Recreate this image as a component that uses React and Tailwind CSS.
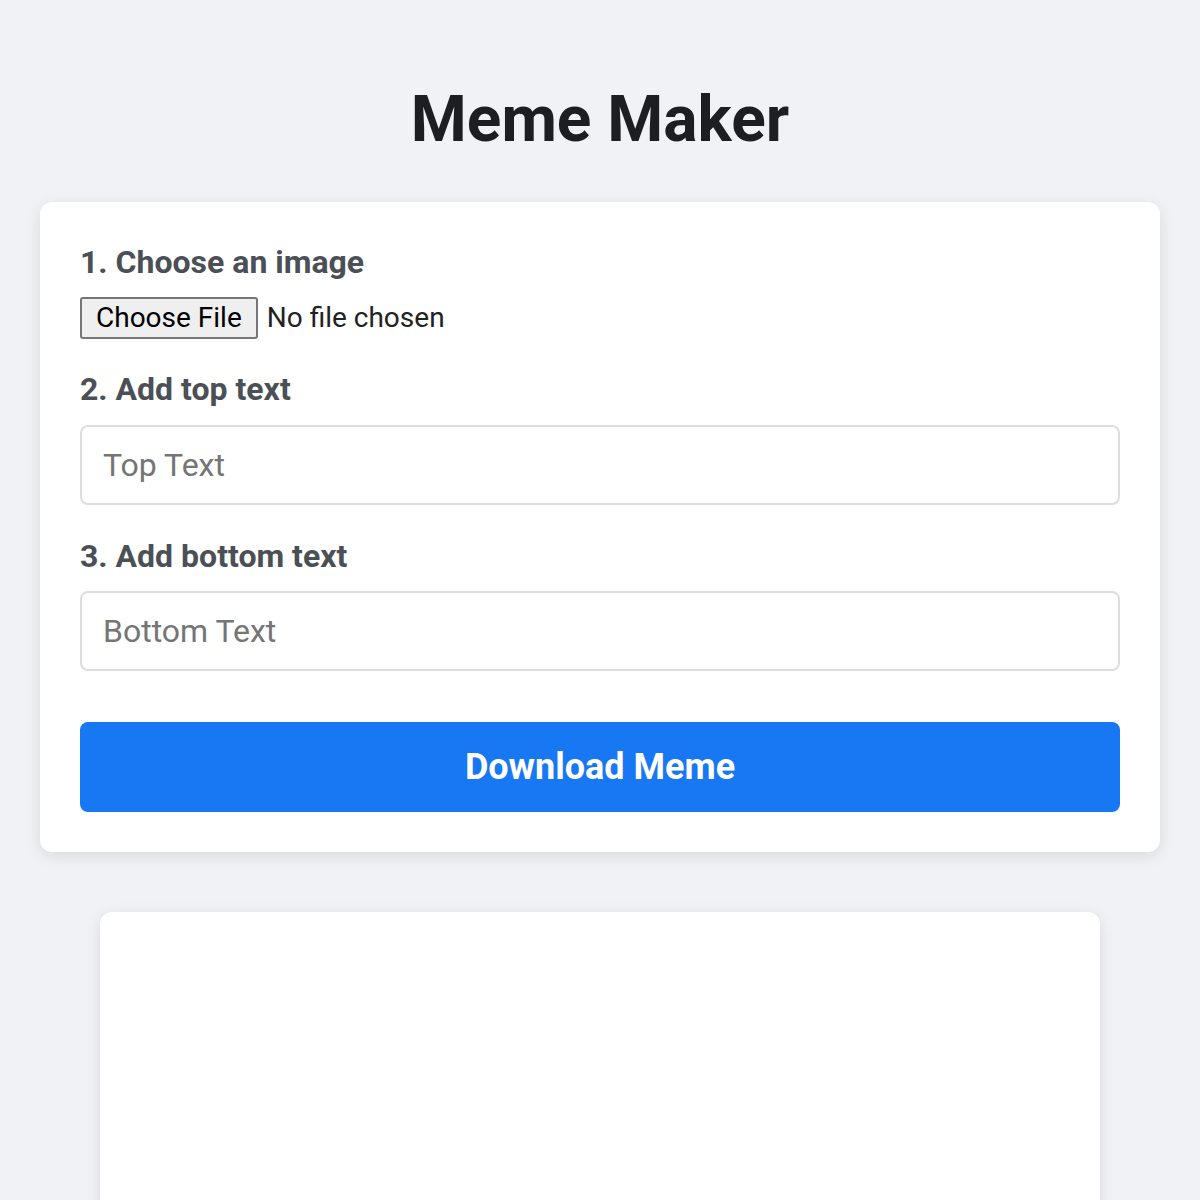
export default function App() {
  return (
    <div className="min-h-screen bg-[#f0f2f5] px-10 pt-[81px] pb-10 font-['Roboto',sans-serif]">
      <h1 className="text-center text-[64px] font-bold leading-[78px] text-[#1c1e21]">
        Meme Maker
      </h1>
      <div className="mt-[43px] rounded-xl bg-white p-10 shadow-[0_4px_16px_rgba(0,0,0,0.1)]">
        <label className="block text-[32px] font-bold leading-[40px] text-[#4b4f56]">
          1. Choose an image
        </label>
        <input
          type="file"
          accept="image/*"
          className="mt-[15px] block text-[28px] leading-[34px] text-[#222] file:mr-[9px] file:rounded-[3px] file:border-2 file:border-solid file:border-[#767676] file:bg-[#efefef] file:px-[14px] file:py-[2px] file:text-black"
        />
        <label className="mt-[30px] block text-[32px] font-bold leading-[40px] text-[#4b4f56]">
          2. Add top text
        </label>
        <input
          type="text"
          placeholder="Top Text"
          className="mt-[16px] block h-[80px] w-full rounded-lg border-2 border-[#ddd] px-[21px] text-[32px] text-[#1c1e21] outline-none placeholder:text-[#757575]"
        />
        <label className="mt-[31px] block text-[32px] font-bold leading-[40px] text-[#4b4f56]">
          3. Add bottom text
        </label>
        <input
          type="text"
          placeholder="Bottom Text"
          className="mt-[15px] block h-[80px] w-full rounded-lg border-2 border-[#ddd] px-[21px] text-[32px] text-[#1c1e21] outline-none placeholder:text-[#757575]"
        />
        <button className="mt-[51px] block h-[90px] w-full cursor-pointer rounded-lg bg-[#1877f2] text-[36px] font-bold text-white">
          Download Meme
        </button>
      </div>
      <div className="mx-auto mt-[60px] h-[500px] w-[1000px] rounded-xl bg-white shadow-[0_4px_16px_rgba(0,0,0,0.1)]"></div>
    </div>
  );
}
